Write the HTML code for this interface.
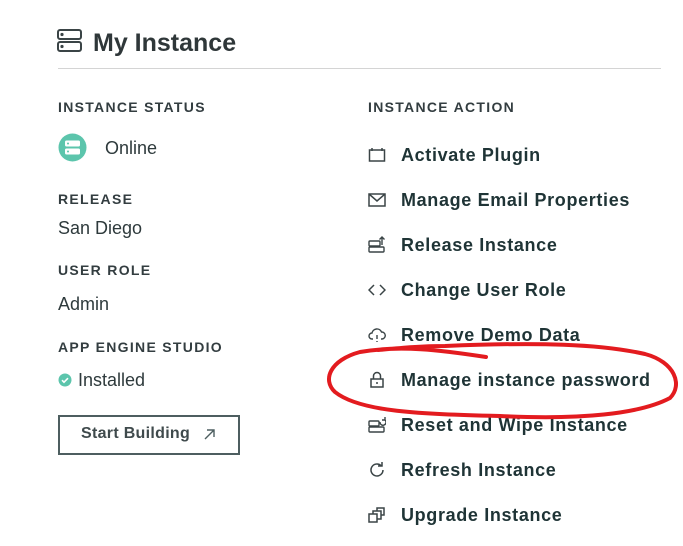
<!DOCTYPE html>
<html><head><meta charset="utf-8"><style>
body{margin:0;width:683px;height:546px;background:#fff;position:relative;overflow:hidden;font-family:"Liberation Sans",sans-serif;color:#293e40}
.a{position:absolute;white-space:nowrap;line-height:1}
.h{font-size:14px;font-weight:bold;letter-spacing:1.3px;color:#333d40}
.v{font-size:18px;color:#2e3a3c}
.i{font-size:18px;font-weight:bold;color:#1f3436;left:401px;letter-spacing:0.65px}
svg{position:absolute}
</style></head><body>
<svg style="left:57px;top:28px" width="26" height="26" viewBox="0 0 26 26" fill="none" stroke="#3a4446" stroke-width="2"><rect x="1" y="2" width="23" height="9" rx="2"/><rect x="1" y="14" width="23" height="9" rx="2"/><circle cx="5" cy="6.5" r=".6" fill="#3a4446"/><circle cx="5" cy="18.5" r=".6" fill="#3a4446"/></svg>
<div class="a" style="left:93px;top:31px;font-size:25px;font-weight:bold;color:#2f3739">My Instance</div>
<div class="a" style="left:58px;top:68px;width:603px;height:1px;background:#d4d4d4"></div>

<div class="a h" style="left:58px;top:100px">INSTANCE STATUS</div>
<svg style="left:58px;top:133px" width="29" height="29" viewBox="0 0 29 29"><circle cx="14.5" cy="14.5" r="14" fill="#5cc5ac"/><rect x="7" y="7.5" width="15" height="6" rx="1.5" fill="#fff"/><rect x="7" y="15.5" width="15" height="6" rx="1.5" fill="#fff"/><circle cx="10" cy="10.5" r="1" fill="#5cc5ac"/><circle cx="10" cy="18.5" r="1" fill="#5cc5ac"/></svg>
<div class="a v" style="left:105px;top:139px">Online</div>
<div class="a h" style="left:58px;top:192px">RELEASE</div>
<div class="a v" style="left:58px;top:219px">San Diego</div>
<div class="a h" style="left:58px;top:263px">USER ROLE</div>
<div class="a v" style="left:58px;top:295px">Admin</div>
<div class="a h" style="left:58px;top:340px">APP ENGINE STUDIO</div>
<svg style="left:58px;top:373px" width="14" height="14" viewBox="0 0 14 14"><circle cx="7" cy="7" r="6.5" fill="#5cc5ac"/><path d="M4 7.2l2 2 4-4" stroke="#fff" stroke-width="1.6" fill="none"/></svg>
<div class="a v" style="left:78px;top:371px">Installed</div>
<div class="a" style="left:58px;top:415px;width:178px;height:36px;border:2px solid #4d5e60"></div>
<div class="a" style="left:81px;top:426px;font-size:16px;font-weight:bold;color:#3f4a4c;letter-spacing:0.3px">Start Building</div>
<svg style="left:203px;top:428px" width="13" height="13" viewBox="0 0 13 13" fill="none" stroke="#4d5e60" stroke-width="1.4"><path d="M2 11L11 2M4 2h7v7"/></svg>

<div class="a h" style="left:368px;top:100px">INSTANCE ACTION</div>
<svg style="left:368px;top:146px" width="18" height="18" viewBox="0 0 18 18" fill="none" stroke="#3a4446" stroke-width="1.5"><rect x="1.5" y="4" width="15" height="11"/><path d="M4 2v3M14 2v3"/></svg>
<div class="a i" style="top:146px">Activate Plugin</div>
<svg style="left:368px;top:192px" width="18" height="16" viewBox="0 0 18 16" fill="none" stroke="#3a4446" stroke-width="1.5"><rect x="1" y="2" width="16" height="12"/><path d="M1 2l8 7 8-7"/></svg>
<div class="a i" style="top:191px">Manage Email Properties</div>
<svg style="left:368px;top:236px" width="18" height="18" viewBox="0 0 18 18" fill="none" stroke="#3a4446" stroke-width="1.4"><rect x="1" y="5" width="11" height="5" rx="1"/><rect x="1" y="11" width="15" height="5" rx="1"/><path d="M14 9V1M11.5 3.5L14 1l2.5 2.5"/></svg>
<div class="a i" style="top:236px">Release Instance</div>
<svg style="left:368px;top:282px" width="18" height="16" viewBox="0 0 18 16" fill="none" stroke="#3a4446" stroke-width="1.5"><path d="M6 3L1 8l5 5M12 3l5 5-5 5"/></svg>
<div class="a i" style="top:281px">Change User Role</div>
<svg style="left:368px;top:326px" width="18" height="18" viewBox="0 0 18 18" fill="none" stroke="#3a4446" stroke-width="1.4"><path d="M5 13H4a3 3 0 010-6 5 5 0 019.5-1A3.5 3.5 0 0114 13h-1M9 9v4M9 15v1"/></svg>
<div class="a i" style="top:326px">Remove Demo Data</div>
<svg style="left:368px;top:371px" width="18" height="18" viewBox="0 0 18 18" fill="none" stroke="#3a4446" stroke-width="1.5"><rect x="3" y="8" width="12" height="8"/><path d="M5.5 8V5a3.5 3.5 0 017 0v3M9 11v2"/></svg>
<div class="a i" style="top:371px">Manage instance password</div>
<svg style="left:368px;top:416px" width="18" height="18" viewBox="0 0 18 18" fill="none" stroke="#3a4446" stroke-width="1.4"><rect x="1" y="5" width="10" height="5" rx="1"/><rect x="1" y="11" width="15" height="5" rx="1"/><path d="M12 6a3 3 0 105-2M17 1v3h-3"/></svg>
<div class="a i" style="top:416px">Reset and Wipe Instance</div>
<svg style="left:368px;top:461px" width="18" height="18" viewBox="0 0 18 18" fill="none" stroke="#3a4446" stroke-width="1.5"><path d="M15 9a6 6 0 11-2-4.5M14 1v4h-4"/></svg>
<div class="a i" style="top:461px">Refresh Instance</div>
<svg style="left:368px;top:506px" width="18" height="18" viewBox="0 0 18 18" fill="none" stroke="#3a4446" stroke-width="1.5"><rect x="1" y="8" width="8" height="8"/><path d="M5 8V5h8v8h-4M9 5V2h7v7h-3"/></svg>
<div class="a i" style="top:506px">Upgrade Instance</div>

<svg style="left:0;top:0" width="683" height="546" viewBox="0 0 683 546" fill="none" stroke="#e31b1f" stroke-width="4" stroke-linecap="round"><path d="M486 357C440 350 400 345 360 352C330 360 322 380 335 392C360 412 420 414 500 416C580 420 640 414 670 398C683 385 675 362 645 354C600 344 540 342 445 346C420 346 400 348 378 350"/></svg>
</body></html>
